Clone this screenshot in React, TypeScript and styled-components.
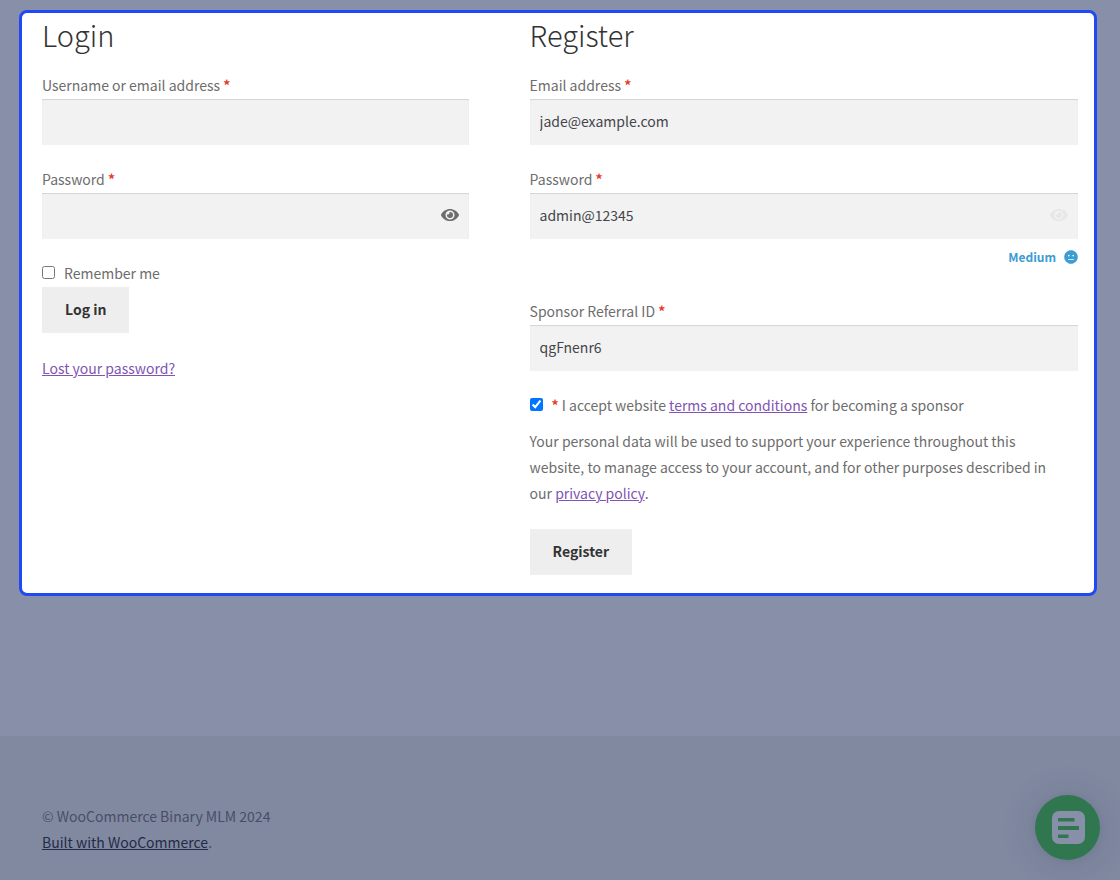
import React from "react";
import styled, { createGlobalStyle } from "styled-components";
import { FaEye, FaMeh } from "react-icons/fa";

const GlobalStyle = createGlobalStyle`
  *, *::before, *::after { box-sizing: border-box; }
  body {
    margin: 0;
    background: #888fa9;
    color: #6d6d6d;
    font-family: "Source Sans Pro", "Noto Sans CJK SC", sans-serif;
    font-size: 14px;
    line-height: 26px;
  }
  input, button { font: inherit; }
`;

const Page = styled.div`
  display: flex;
  flex-direction: column;
  min-height: 100vh;
`;

const Account = styled.main`
  display: grid;
  grid-template-columns: 7fr 9fr;
  column-gap: 61px;
  margin: 10px 23px 140px 19px;
  padding: 3px 16px 18px 20px;
  border: 3px solid #2049f5;
  border-radius: 8px;
  background: #fff;
`;

const Column = styled.section`
  min-width: 0;
`;

const Title = styled.h2`
  margin: 0 0 20px;
  color: #333;
  font-size: 29px;
  font-weight: 300;
  line-height: 37px;
`;

const Form = styled.form`
  display: flex;
  flex-direction: column;
  align-items: flex-start;
`;

const Field = styled.div`
  width: 100%;
  margin-bottom: 22px;
`;

const Label = styled.label`
  display: block;
  padding-bottom: 2px;
  line-height: 24px;
`;

const Required = styled.span`
  color: #e83a25;
  font-weight: 700;
`;

const InputWrap = styled.div`
  position: relative;
`;

const Input = styled.input`
  display: block;
  width: 100%;
  height: 46px;
  padding: 8px 10px 10px;
  border: 0;
  border-radius: 0;
  outline: 0;
  background: #f2f2f2;
  box-shadow: inset 0 1px 1px rgba(0, 0, 0, 0.125);
  color: #43454b;
`;

const Reveal = styled.button<{ $faded?: boolean }>`
  position: absolute;
  top: 14px;
  right: 10px;
  display: flex;
  padding: 0;
  border: 0;
  background: none;
  color: ${(p) => (p.$faded ? "#e7e7e7" : "#6d6d6d")};

  svg { width: 18px; height: 16px; }
`;

const Strength = styled.div`
  display: flex;
  align-items: center;
  justify-content: flex-end;
  gap: 8px;
  padding: 5px 0 7px;
  color: #3d9cd2;
  font-size: 12px;
  font-weight: 700;

  svg { width: 14px; height: 14px; }
`;

const CheckLabel = styled.label`
  display: flex;
  align-items: center;
  gap: 9px;
  padding-bottom: 2px;
  line-height: 24px;
`;

const Checkbox = styled.input`
  width: 13px;
  height: 13px;
  margin: 0 0 2px;
`;

const Button = styled.button`
  height: 46px;
  padding: 0 23px 2px;
  border: 0;
  background: #eee;
  color: #333;
  font-weight: 700;
`;

const Link = styled.a`
  color: #7f54b3;
  text-decoration: underline;
`;

const Lost = styled.p`
  margin: 22px 0 0;
`;

const Privacy = styled.p`
  margin: 9px 0 23px;
  padding-right: 12px;
`;

const Footer = styled.footer`
  flex: 1;
  padding: 67px 42px 24px;
  background: #8189a1;
  color: #484e66;

  a { color: #232b47; }
`;

const Chat = styled.button`
  position: fixed;
  right: 20px;
  bottom: 20px;
  width: 65px;
  height: 65px;
  padding: 0;
  border: 0;
  border-radius: 50%;
  background: #30774f;
  box-shadow: 0 1px 6px rgba(30, 38, 66, 0.06), 0 2px 36px rgba(30, 38, 66, 0.16);

  svg { display: block; margin: 0 15px 0 17px; }
`;

function Star() {
  return <Required aria-hidden="true">*</Required>;
}

type FieldProps = {
  id: string;
  label: string;
  type?: string;
  value?: string;
  reveal?: "solid" | "faded";
  children?: React.ReactNode;
};

function TextField({ id, label, type = "text", value, reveal, children }: FieldProps) {
  return (
    <Field>
      <Label htmlFor={id}>{label} <Star /></Label>
      <InputWrap>
        <Input id={id} type={type} defaultValue={value} required />
        {reveal && (
          <Reveal type="button" aria-label="Toggle password visibility" $faded={reveal === "faded"}>
            <FaEye />
          </Reveal>
        )}
      </InputWrap>
      {children}
    </Field>
  );
}

export default function App() {
  return (
    <Page>
      <GlobalStyle />
      <Account>
        <Column>
          <Title>Login</Title>
          <Form>
            <TextField id="username" label="Username or email address" />
            <TextField id="password" label="Password" type="password" reveal="solid" />
            <CheckLabel>
              <Checkbox type="checkbox" />
              <span>Remember me</span>
            </CheckLabel>
            <Button type="submit">Log in</Button>
            <Lost><Link href="#lost">Lost your password?</Link></Lost>
          </Form>
        </Column>
        <Column>
          <Title>Register</Title>
          <Form>
            <TextField id="reg-email" label="Email address" type="email" value="jade@example.com" />
            <TextField id="reg-password" label="Password" value="admin@12345" reveal="faded">
              <Strength role="status">Medium <FaMeh /></Strength>
            </TextField>
            <TextField id="sponsor" label="Sponsor Referral ID" value="qgFnenr6" />
            <CheckLabel>
              <Checkbox type="checkbox" defaultChecked />
              <span>
                <Star /> I accept website <Link href="#terms">terms and conditions</Link> for becoming a sponsor
              </span>
            </CheckLabel>
            <Privacy>
              Your personal data will be used to support your experience throughout this website, to manage
              access to your account, and for other purposes described in our{" "}
              <Link href="#privacy">privacy policy</Link>.
            </Privacy>
            <Button type="submit">Register</Button>
          </Form>
        </Column>
      </Account>
      <Footer>
        © WooCommerce Binary MLM 2024
        <br />
        <Link href="#woocommerce">Built with WooCommerce</Link>.
      </Footer>
      <Chat type="button" aria-label="Open chat">
        <svg width="33" height="33" viewBox="0 0 33 33">
          <rect width="33" height="33" rx="7" fill="#888fa9" />
          <path d="M6 7h16.500v3.500H6zM6 15h21v4H6zM6 23.500h10.500v3.500H6z" fill="#30774f" />
        </svg>
      </Chat>
    </Page>
  );
}
